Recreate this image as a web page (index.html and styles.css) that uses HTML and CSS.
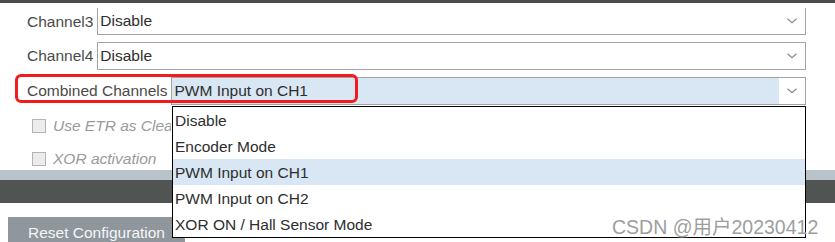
FILE: index.html
```html
<!DOCTYPE html>
<html>
<head>
<meta charset="utf-8">
<link rel="stylesheet" href="styles.css">
</head>
<body>
<div class="page">
  <div class="topbar"></div>
  <div class="form">
    <div class="row">
      <span class="label">Channel3</span>
      <div class="select first">
        <span class="value">Disable</span>
        <span class="arrow"><svg width="10" height="6" viewBox="0 0 10 6"><polyline points="0.5,0.8 5,4.8 9.5,0.8" fill="none" stroke="#8a8a8a" stroke-width="1.2"/></svg></span>
      </div>
    </div>
    <div class="row">
      <span class="label">Channel4</span>
      <div class="select">
        <span class="value">Disable</span>
        <span class="arrow"><svg width="10" height="6" viewBox="0 0 10 6"><polyline points="0.5,0.8 5,4.8 9.5,0.8" fill="none" stroke="#8a8a8a" stroke-width="1.2"/></svg></span>
      </div>
    </div>
    <div class="row">
      <span class="label">Combined Channels</span>
      <div class="select active">
        <span class="value">PWM Input on CH1</span>
        <span class="arrow"><svg width="10" height="6" viewBox="0 0 10 6"><polyline points="0.5,0.8 5,4.8 9.5,0.8" fill="none" stroke="#8a8a8a" stroke-width="1.2"/></svg></span>
      </div>
    </div>
    <div class="checks">
      <label class="check"><span class="box"></span><span class="ctext clip">Use ETR as Clearing Source</span></label>
      <label class="check"><span class="box"></span><span class="ctext">XOR activation</span></label>
    </div>
  </div>
  <div class="band-light"></div>
  <div class="band-dark"></div>
  <div class="footer">
    <div class="reset">Reset Configuration</div>
  </div>

  <ul class="dropdown">
    <li>Disable</li>
    <li>Encoder Mode</li>
    <li class="hl">PWM Input on CH1</li>
    <li>PWM Input on CH2</li>
    <li>XOR ON / Hall Sensor Mode</li>
  </ul>
  <div class="redbox"></div>
  <div class="watermark">CSDN @用户20230412</div>
</div>
</body>
</html>
```

FILE: styles.css
```css
html, body {
  margin: 0;
  padding: 0;
  background: #ffffff;
}
.page {
  position: relative;
  width: 835px;
  height: 242px;
  overflow: hidden;
  font-family: "Liberation Sans", Arial, sans-serif;
  font-size: 15.5px;
  color: #333;
}
.topbar {
  height: 3px;
  background: #4b4b4b;
}
.form {
  padding: 5px 29px 0 27px;
}
.row {
  display: flex;
  align-items: center;
  margin-bottom: 7px;
}
.label {
  color: #4a4a4a;
  padding-right: 4px;
  white-space: nowrap;
}
.select {
  flex: 1;
  box-sizing: border-box;
  height: 28px;
  border: 1px solid #a3a3a3;
  display: flex;
  align-items: center;
  background: #fff;
}
.select.first {
  border-top: none;
  height: 27px;
}
.value {
  flex: 1;
  padding-left: 2px;
  color: #2e2e2e;
  align-self: stretch;
  display: flex;
  align-items: center;
}
.select.active .value {
  background: #d9e7f4;
}
.arrow {
  width: 26px;
  display: flex;
  justify-content: center;
  align-items: center;
}
.arrow svg { display: block; }
.checks {
  display: flex;
  flex-direction: column;
  gap: 19px;
  padding: 7px 0 4px 5px;
}
.check {
  display: flex;
  align-items: center;
  height: 14px;
}
.box {
  box-sizing: border-box;
  width: 14px;
  height: 14px;
  border: 1px solid #b4b4b4;
  background: #ececec;
  margin-right: 7px;
}
.ctext {
  font-style: italic;
  color: #9a9a9a;
  white-space: nowrap;
}
.ctext.clip {
  max-width: 118px;
  overflow: hidden;
}
.band-light {
  height: 10px;
  background: #b9c4ca;
}
.band-dark {
  height: 23px;
  background: #505452;
}
.footer {
  padding: 14px 0 0 8px;
}
.reset {
  width: 177px;
  height: 32px;
  box-sizing: border-box;
  background: #8f979d;
  color: #f4f6f7;
  padding: 6px 0 0 20px;
  line-height: 20px;
  font-size: 15.5px;
}
.dropdown {
  position: absolute;
  left: 172px;
  top: 106px;
  width: 634px;
  box-sizing: border-box;
  margin: 0;
  padding: 0;
  list-style: none;
  border: 1px solid #000;
  background: #fff;
}
.dropdown li {
  height: 26px;
  line-height: 27px;
  padding-left: 2px;
  color: #2e2e2e;
}
.dropdown li.hl {
  background: #d9e7f4;
}
.redbox {
  position: absolute;
  left: 15px;
  top: 74px;
  width: 343px;
  height: 29px;
  box-sizing: border-box;
  border: 3px solid #f11c1c;
  border-radius: 6px;
}
.watermark {
  position: absolute;
  left: 612px;
  top: 211px;
  font-family: "Liberation Sans", "Noto Sans CJK SC", sans-serif;
  font-size: 19.5px;
  color: #9e9e9e;
  text-shadow: 0 0 2px #fff;
  white-space: nowrap;
}
```
